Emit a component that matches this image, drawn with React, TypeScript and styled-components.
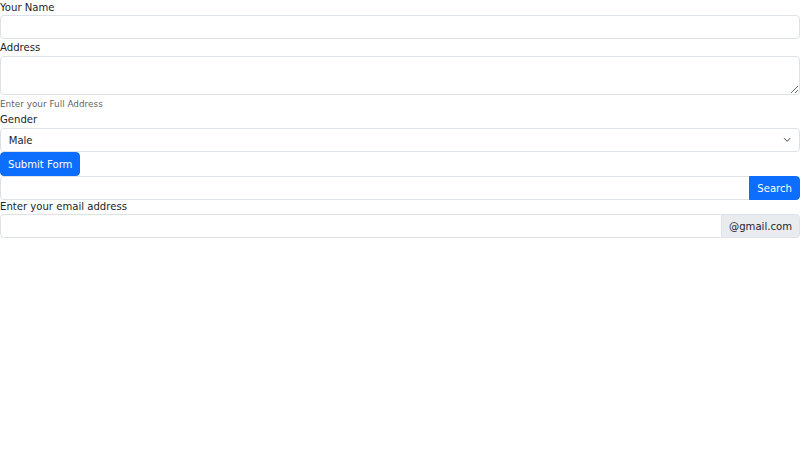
import styled, { createGlobalStyle } from "styled-components";

const GlobalStyle = createGlobalStyle`
  html, body {
    margin: 0;
    padding: 0;
    background: #fff;
  }
  body {
    font-family: "DejaVu Sans", "Liberation Sans", sans-serif;
    font-size: 10px;
    line-height: 1.5;
    color: #212529;
  }
  *, *::before, *::after {
    box-sizing: border-box;
  }
`;

const Form = styled.form`
  display: block;
  width: 800px;
  margin: 0;
`;

const Field = styled.div`
  display: block;
`;

const Label = styled.label<{ $h?: number }>`
  display: block;
  font-size: 10.1px;
  line-height: ${({ $h }) => $h ?? 15.36}px;
`;

const controlBase = `
  display: block;
  width: 100%;
  margin: 0;
  font-family: inherit;
  font-size: 10.1px;
  line-height: 15.36px;
  color: #212529;
  background: #fff;
  border: 1px solid #dee2e6;
  border-radius: 3.84px;
  padding: 3.5px 7.68px;
  outline: none;
`;

const Input = styled.input<{ $group?: "left" }>`
  ${controlBase}
  height: 24px;
  ${({ $group }) =>
    $group === "left" &&
    `
    flex: 1 1 auto;
    width: 1%;
    border-top-right-radius: 0;
    border-bottom-right-radius: 0;
  `}
`;

const TextArea = styled.textarea`
  ${controlBase}
  height: 39px;
  resize: vertical;
`;

const HelpText = styled.div`
  margin-top: 3px;
  font-size: 8.9px;
  line-height: 13px;
  color: rgba(33, 37, 41, 0.75);
`;

const SelectWrap = styled.div`
  position: relative;
`;

const Select = styled.select`
  ${controlBase}
  height: 24px;
  appearance: none;
  padding-right: 28px;
`;

const Chevron = styled.svg`
  position: absolute;
  right: 7.68px;
  top: 8.2px;
  width: 10.24px;
  height: 7.68px;
  pointer-events: none;
`;

const Button = styled.button<{ $group?: "right" }>`
  display: inline-block;
  font-family: inherit;
  font-size: 10.1px;
  line-height: 15.36px;
  color: #fff;
  background: #0d6efd;
  border: 1px solid #0d6efd;
  border-radius: 3.84px;
  padding: 3.5px 7px;
  height: 24px;
  cursor: pointer;
  vertical-align: top;
  ${({ $group }) =>
    $group === "right" &&
    `
    border-top-left-radius: 0;
    border-bottom-left-radius: 0;
    margin-left: -1px;
  `}
`;

const InputGroup = styled.div`
  display: flex;
  align-items: stretch;
  width: 100%;
`;

const GroupText = styled.span`
  display: flex;
  align-items: center;
  padding: 3.5px 7px;
  font-size: 10.1px;
  line-height: 15.36px;
  color: #212529;
  background: #e9ecef;
  border: 1px solid #dee2e6;
  border-radius: 0 3.84px 3.84px 0;
  margin-left: -1px;
  white-space: nowrap;
`;

export default function App() {
  return (
    <>
      <GlobalStyle />
      <Form onSubmit={(e) => e.preventDefault()}>
        <Field>
          <Label htmlFor="name" $h={15}>
            Your Name
          </Label>
          <Input id="name" type="text" />
        </Field>
        <Field>
          <Label htmlFor="address" $h={17}>
            Address
          </Label>
          <TextArea id="address" rows={2} />
          <HelpText>Enter your Full Address</HelpText>
        </Field>
        <Field>
          <Label htmlFor="gender" $h={17}>
            Gender
          </Label>
          <SelectWrap>
            <Select id="gender" defaultValue="male">
              <option value="male">Male</option>
              <option value="female">Female</option>
            </Select>
            <Chevron viewBox="0 0 16 16">
              <path
                d="m2 5 6 6 6-6"
                fill="none"
                stroke="#343a40"
                strokeWidth="2"
                strokeLinecap="round"
                strokeLinejoin="round"
              />
            </Chevron>
          </SelectWrap>
        </Field>
        <Button type="submit">Submit Form</Button>
        <InputGroup>
          <Input $group="left" type="text" />
          <Button $group="right" type="button">
            Search
          </Button>
        </InputGroup>
        <Field>
          <Label htmlFor="email" $h={14}>
            Enter your email address
          </Label>
          <InputGroup>
            <Input id="email" $group="left" type="text" />
            <GroupText>@gmail.com</GroupText>
          </InputGroup>
        </Field>
      </Form>
    </>
  );
}
